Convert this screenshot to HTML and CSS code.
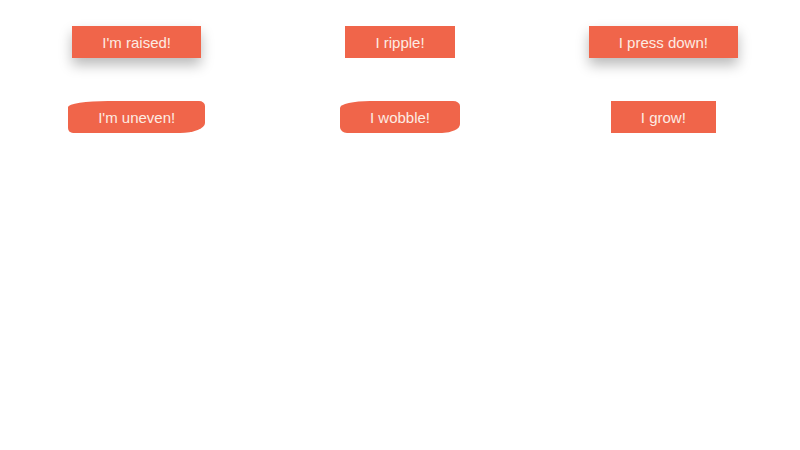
FILE: index.html
```html
<!DOCTYPE html>
<html lang="en">
<head>
    <meta charset="UTF-8">
    <meta name="viewport" content="width=device-width, initial-scale=1.0">
    <title>Button effects</title>
    <link rel="stylesheet" href="styles.css">
</head>
<body>
    <!-- Button demo grid -->
    <div class="grid">
        <div class="cell"><button class="btn raised">I'm raised!</button></div>
        <div class="cell"><button class="btn ripple">I ripple!</button></div>
        <div class="cell"><button class="btn press">I press down!</button></div>

        <div class="cell"><button class="btn uneven">I'm uneven!</button></div>
        <div class="cell"><button class="btn wobble">I wobble!</button></div>
        <div class="cell"><button class="btn grow">I grow!</button></div>
    </div>
</body>
</html>
```

FILE: styles.css
```css
/* Basic Styling */
body {
    margin: 0;
    padding: 0;
    background: #fff;
    font-family: "Liberation Sans", Arial, sans-serif;
}

/* Three columns of buttons */
.grid {
    display: grid;
    grid-template-columns: repeat(3, 1fr);
    row-gap: 43px;
    padding: 26px 5px 0;
}

.cell {
    display: flex;
    justify-content: center;
}

.btn {
    height: 32px;
    padding: 0 30px;
    border: none;
    background: #f0654a;
    color: #fdece3;
    font-family: inherit;
    font-size: 15px;
    cursor: pointer;
    transition: all 0.2s;
}

/* Shadowed buttons */
.raised,
.press {
    box-shadow: 0 7px 13px rgba(0, 0, 0, 0.27);
}

.press:active {
    transform: translateY(4px);
    box-shadow: 0 2px 4px rgba(0, 0, 0, 0.3);
}

/* Hand-drawn edges */
.uneven {
    border-radius: 40px 6px 25px 5px / 6px 5px 10px 5px;
}

.wobble {
    border-radius: 30px 7px 18px 7px / 7px 5px 9px 6px;
}

.grow:hover {
    transform: scale(1.1);
}
```
